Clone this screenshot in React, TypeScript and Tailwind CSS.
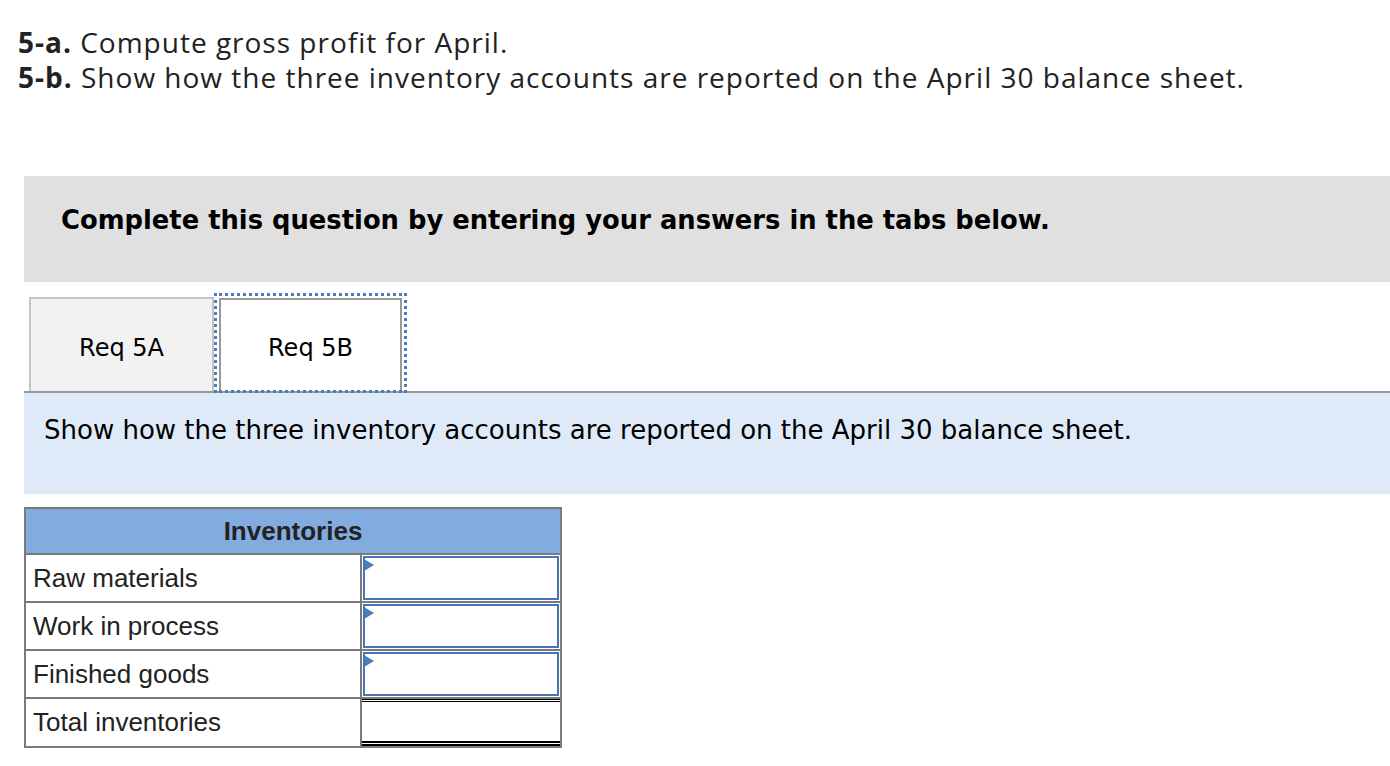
import React from "react"

const rows = [
  { label: "Raw materials", input: true },
  { label: "Work in process", input: true },
  { label: "Finished goods", input: true },
]

function InputCell() {
  return (
    <div className="relative h-full p-[1px]">
      <div className="h-full w-full border-2 border-[#4a74b4] bg-white" />
      <div className="absolute left-[2px] top-[4px] h-0 w-0 border-y-[6px] border-l-[10px] border-y-transparent border-l-[#4a7cc0]" />
    </div>
  )
}

export default function App() {
  return (
    <div className="min-h-[766px] w-[1390px] bg-white text-[#222]">
      {/* question text */}
      <div className="pl-[18px] pt-[25px] font-['Open_Sans',sans-serif] text-[28px] leading-[35px] tracking-[1px]">
        <p>
          <b>5-a.</b> Compute gross profit for April.
        </p>
        <p>
          <b>5-b.</b> Show how the three inventory accounts are reported on the April 30 balance sheet.
        </p>
      </div>

      <div className="ml-[24px] mt-[81px]">
        <div className="h-[106px] bg-[#e0e0e0] pl-[37px] pt-[29px] font-['DejaVu_Sans',Verdana,sans-serif] text-[25.8px] leading-[30px] font-bold text-black">
          Complete this question by entering your answers in the tabs below.
        </div>

        {/* tabs */}
        <div className="mt-[11px] flex items-end border-b-2 border-[#999] pl-[5px] font-['DejaVu_Sans',Verdana,sans-serif] text-[24px] text-black">
          <div className="flex h-[94px] w-[185px] items-center justify-center border-2 border-b-0 border-[#c4c4c4] bg-[#f2f2f2] pt-[6px]">
            Req 5A
          </div>
          <div className="relative -mb-[2px] flex h-[100px] w-[193px] items-center justify-center border-[3px] border-dotted border-[#4a7cc0] pt-[10px]">
            <div className="absolute inset-x-[2px] top-[2px] bottom-[0px] border-2 border-b-0 border-[#999] bg-white" />
            <span className="relative">Req 5B</span>
          </div>
        </div>

        <div className="h-[101px] bg-[#deeaf7] pl-[20px] pt-[20px] font-['DejaVu_Sans',Verdana,sans-serif] text-[26px] leading-[34px] text-black">
          Show how the three inventory accounts are reported on the April 30 balance sheet.
        </div>

        {/* table */}
        <div className="mt-[13px] w-[538px] border-2 border-[#7a7a7a] font-['Liberation_Sans',Arial,sans-serif] text-[26px] text-[#222]">
          <div className="flex h-[46px] items-center justify-center border-b-2 border-[#7a7a7a] bg-[#82abe0] font-bold">
            Inventories
          </div>
          {rows.map((r) => (
            <div key={r.label} className="grid h-[48px] grid-cols-[336px_1fr] border-b-2 border-[#7a7a7a]">
              <div className="flex items-center border-r-2 border-[#7a7a7a] pl-[7px]">{r.label}</div>
              <InputCell />
            </div>
          ))}
          <div className="grid h-[47px] grid-cols-[336px_1fr]">
            <div className="flex items-center border-r-2 border-[#7a7a7a] pl-[7px]">Total inventories</div>
            <div className="border-t-[3px] border-b-[5px] border-double border-black" />
          </div>
        </div>
      </div>
    </div>
  )
}
